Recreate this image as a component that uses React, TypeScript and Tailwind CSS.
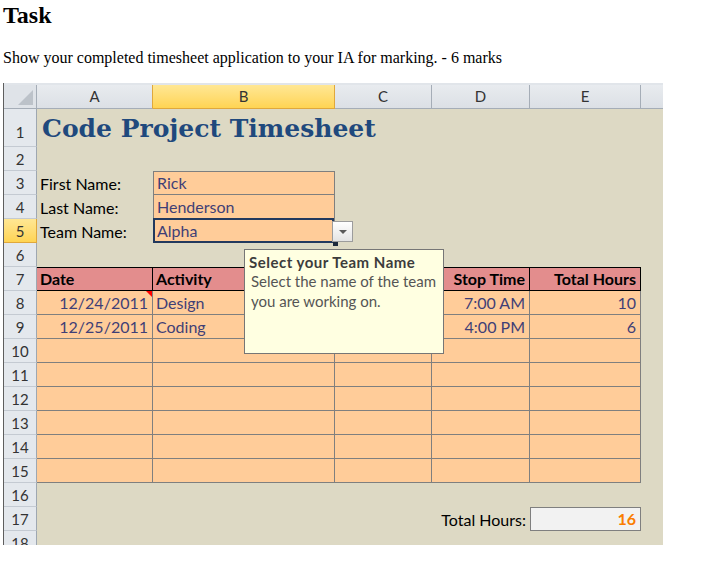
import React from 'react';

type Cell = { t?: string; c: string; extra?: React.ReactNode };

const base = 'relative flex items-end whitespace-nowrap pb-[2px] text-[16px] leading-[18px]';
const left = ' justify-start pl-[3px]';
const right = ' justify-end pr-[4px]';
const label = base + left + ' text-black';
const input = ' bg-[#FFCC99] text-[#3F3F76] border-[#7F7F7F]';
const th = base + ' bg-[#E38D8D] font-bold text-black border-t border-r border-b border-black';
const td = base + ' bg-[#FFCC99] text-[#3F3F76] border-r border-b border-[#7F7F7F]';
const blank: Cell = { c: base };

const emptyRow = (): Cell[] => Array.from({ length: 6 }, () => blank);

// column C sits under the input message, so its values are left out
const dataRow = (a = '', b = '', d = '', e = '', mark = false): Cell[] => [
  {
    t: a,
    c: td + right,
    // comment indicator
    extra: mark ? (
      <span className="absolute right-0 top-0 h-0 w-0 border-l-[6px] border-t-[6px] border-l-transparent border-t-[#FF0000]" />
    ) : null,
  },
  { t: b, c: td + left },
  { c: td + right },
  { t: d, c: td + right },
  { t: e, c: td + right },
  blank,
];

const teamSelection = (
  <>
    <span className="absolute -left-px -top-px -bottom-px right-0 z-10 border-2 border-[#22395E]" />
    <span className="absolute left-[179px] top-[22px] z-10 h-[5px] w-[5px] bg-[#1E2A3C]" />
    <span className="absolute left-[178px] top-[2px] z-20 flex h-[21px] w-[21px] items-center justify-center border border-[#9C9C9C] bg-linear-to-b from-white to-[#E4E4E4]">
      <span className="h-0 w-0 border-x-[4px] border-t-[4px] border-x-transparent border-t-[#5A5A5A]" />
    </span>
  </>
);

const rows: Cell[][] = [
  emptyRow(), // title row, drawn separately
  emptyRow(),
  [{ t: 'First Name:', c: label }, { t: 'Rick', c: base + left + input + ' border' }, blank, blank, blank, blank],
  [{ t: 'Last Name:', c: label }, { t: 'Henderson', c: base + left + input + ' border-x border-b' }, blank, blank, blank, blank],
  [
    { t: 'Team Name:', c: label },
    { t: 'Alpha', c: base + left + input + ' border-x border-b', extra: teamSelection },
    blank,
    blank,
    blank,
    blank,
  ],
  emptyRow(),
  [
    { t: 'Date', c: th + left },
    { t: 'Activity', c: th + left },
    { c: th + right },
    { t: 'Stop Time', c: th + right },
    { t: 'Total Hours', c: th + right },
    blank,
  ],
  dataRow('12/24/2011', 'Design', '7:00 AM', '10', true),
  dataRow('12/25/2011', 'Coding', '4:00 PM', '6'),
  dataRow(),
  dataRow(),
  dataRow(),
  dataRow(),
  dataRow(),
  dataRow(),
  emptyRow(),
  [
    blank,
    blank,
    blank,
    { t: 'Total Hours:', c: base + right + ' text-black' },
    { t: '16', c: base + right + ' border border-[#7F7F7F] bg-[#F2F2F2] font-bold text-[#FA7D00]' },
    blank,
  ],
  emptyRow(),
];

const colHead = 'flex items-center justify-center bg-linear-to-b from-[#E8EBEF] to-[#DCE0E5] border-b border-r border-[#A5ADB7] text-[15px] text-[#333]';
const colHeadSel = 'flex items-center justify-center bg-linear-to-b from-[#FFE793] to-[#FFD452] border-b border-r border-[#E0A83C] text-[15px] text-[#333]';

const rowHead = 'flex items-end justify-center pb-[2px] bg-[#E4E8ED] border-b border-r border-b-[#C4CAD2] border-r-[#9EA7B1] text-[15px] leading-[18px] text-[#333]';
const rowHeadSel = 'flex items-end justify-center pb-[2px] bg-linear-to-b from-[#FFE793] to-[#FFD452] border-b border-r border-b-[#E0A83C] border-r-[#E0A83C] text-[15px] leading-[18px] text-[#333]';

export default function App() {
  return (
    <div className="min-h-screen bg-white pl-[3px] text-black">
      <h2 className="font-['Liberation_Serif',serif] text-[24px] font-bold leading-[30px]">Task</h2>
      <p className="mt-[19px] font-['Liberation_Serif',serif] text-[16px] leading-[18px]">
        Show your completed timesheet application to your IA for marking. - 6 marks
      </p>

      <div className="relative mt-[16px] h-[462px] w-[660px] overflow-hidden border-l border-[#5E5E5E] bg-[#DDD9C4] font-['Lato',sans-serif]">
        <div className="h-[2px] bg-[#E1E5EA]" />
        <div className="grid grid-cols-[33px_116px_182px_97px_98px_111px_22px] grid-rows-[24px_38px_repeat(17,24px)]">
          <div className="relative bg-[#DFE3E8] border-b border-r border-[#A5ADB7]">
            <span className="absolute bottom-[3px] right-[3px] h-0 w-0 border-b-[15px] border-l-[15px] border-b-[#BCC2C9] border-l-transparent" />
          </div>
          <div className={colHead + ' border-r-[#E0A83C]'}>A</div>
          <div className={colHeadSel}>B</div>
          <div className={colHead}>C</div>
          <div className={colHead}>D</div>
          <div className={colHead}>E</div>
          <div className="bg-linear-to-b from-[#E8EBEF] to-[#DCE0E5] border-b border-[#A5ADB7]" />

          {rows.map((r, i) => (
            <React.Fragment key={i}>
              <div className={i === 4 ? rowHeadSel : i === 0 ? rowHead + ' pb-[5px]' : rowHead}>{i + 1}</div>
              {i === 0 ? (
                <div className="col-span-6 flex items-end pb-[6px] pl-[5px] font-['DejaVu_Serif',serif] text-[25px] font-bold leading-none text-[#1F497D]">
                  Code Project Timesheet
                </div>
              ) : (
                r.map((cell, j) => (
                  <div key={j} className={cell.c}>
                    {cell.t}
                    {cell.extra}
                  </div>
                ))
              )}
            </React.Fragment>
          ))}
        </div>

        {/* input message tooltip for the Team Name cell */}
        <div className="absolute left-[240px] top-[166px] z-30 h-[105px] w-[200px] border border-[#767676] bg-[#FFFFE1] pl-[4px] pt-[3px]">
          <div className="text-[15px] font-bold leading-[18px] tracking-[0.5px] text-[#3C3C3C]">Select your Team Name</div>
          <div className="pl-[2px] text-[15px] leading-[20px] text-[#555]">
            <div>Select the name of the team</div>
            <div>you are working on.</div>
          </div>
        </div>
      </div>
    </div>
  );
}
